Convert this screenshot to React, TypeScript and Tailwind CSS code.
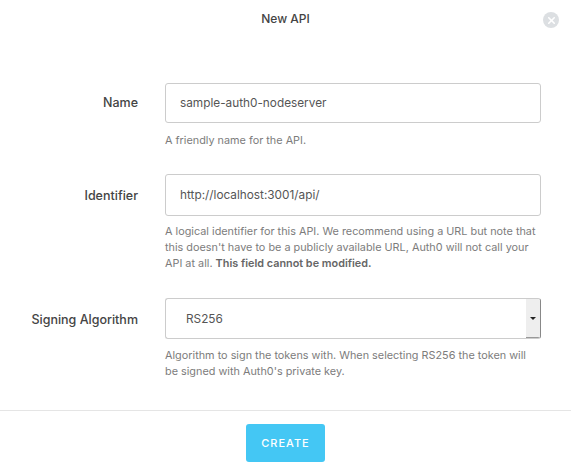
import { X } from "lucide-react";

const font = "font-['Inter',sans-serif]";
const inputClass =
  "flex w-[376px] items-center rounded-[3px] border border-[#ccc] bg-white pl-[14px] pt-[2px] text-[11.8px] text-[#555]";
const hintClass = "w-[376px] text-[10.85px] leading-[16px] text-[#7c7c7c]";

function Row({
  label,
  className,
  labelClass,
  children,
}: {
  label: string;
  className?: string;
  labelClass: string;
  children: React.ReactNode;
}) {
  return (
    <div className={`flex ${className ?? ""}`}>
      <div
        className={`flex w-[138px] items-center justify-end self-start text-[12.5px] font-medium text-[#444] ${labelClass}`}
      >
        {label}
      </div>
      <div className="ml-[27px] flex-1">{children}</div>
    </div>
  );
}

export default function App() {
  return (
    <div className={`${font} h-[474px] w-[571px] overflow-hidden bg-white antialiased`}>
      <header className="relative flex h-[38px] items-center justify-center text-[12px] font-medium text-[#444]">
        New API
        <button
          type="button"
          aria-label="Close"
          className="absolute left-[543px] top-3 flex h-4 w-4 items-center justify-center rounded-full bg-[#dcdfe2] text-white"
        >
          <X size={11} strokeWidth={3.5} aria-hidden="true" />
        </button>
      </header>

      <main className="pt-[45px]">
        <Row label="Name" labelClass="h-[41px]">
          <div className={`${inputClass} h-10`}>sample-auth0-nodeserver</div>
          <p className={`${hintClass} mt-[9px]`}>A friendly name for the API.</p>
        </Row>

        <Row label="Identifier" labelClass="h-[44px]" className="mt-[26px]">
          <div className={`${inputClass} h-[42px]`}>http://localhost:3001/api/</div>
          <p className={`${hintClass} mt-[7px]`}>
            A logical identifier for this API. We recommend using a URL but note that this doesn't have to be a
            publicly available URL, Auth0 will not call your API at all.{" "}
            <span className="font-semibold text-[#666]">This field cannot be modified.</span>
          </p>
        </Row>

        <Row label="Signing Algorithm" labelClass="h-[44px]" className="mt-[27px]">
          <div className="flex h-[41px] w-[376px] overflow-hidden rounded-[3px] border border-[#ccc] border-r-[#888] bg-white">
            <div className="flex flex-1 items-center pl-5 pt-[2px] text-[11.8px] text-[#555]">RS256</div>
            <div className="flex w-[14px] items-center justify-center border-b border-[#999] bg-[#eee]">
              <span className="h-0 w-0 border-x-[3px] border-t-[3px] border-x-transparent border-t-[#222]" />
            </div>
          </div>
          <p className={`${hintClass} mt-[8px]`}>
            Algorithm to sign the tokens with. When selecting RS256 the token will be signed with Auth0's private key.
          </p>
        </Row>
      </main>

      <footer className="mt-[31px] flex justify-center border-t border-[#e5e5e5] pt-[13px]">
        <button
          type="button"
          className="h-[38px] w-[79px] rounded-[3px] bg-[#44c7f4] text-[11px] font-medium tracking-[1px] text-white"
        >
          CREATE
        </button>
      </footer>
    </div>
  );
}
